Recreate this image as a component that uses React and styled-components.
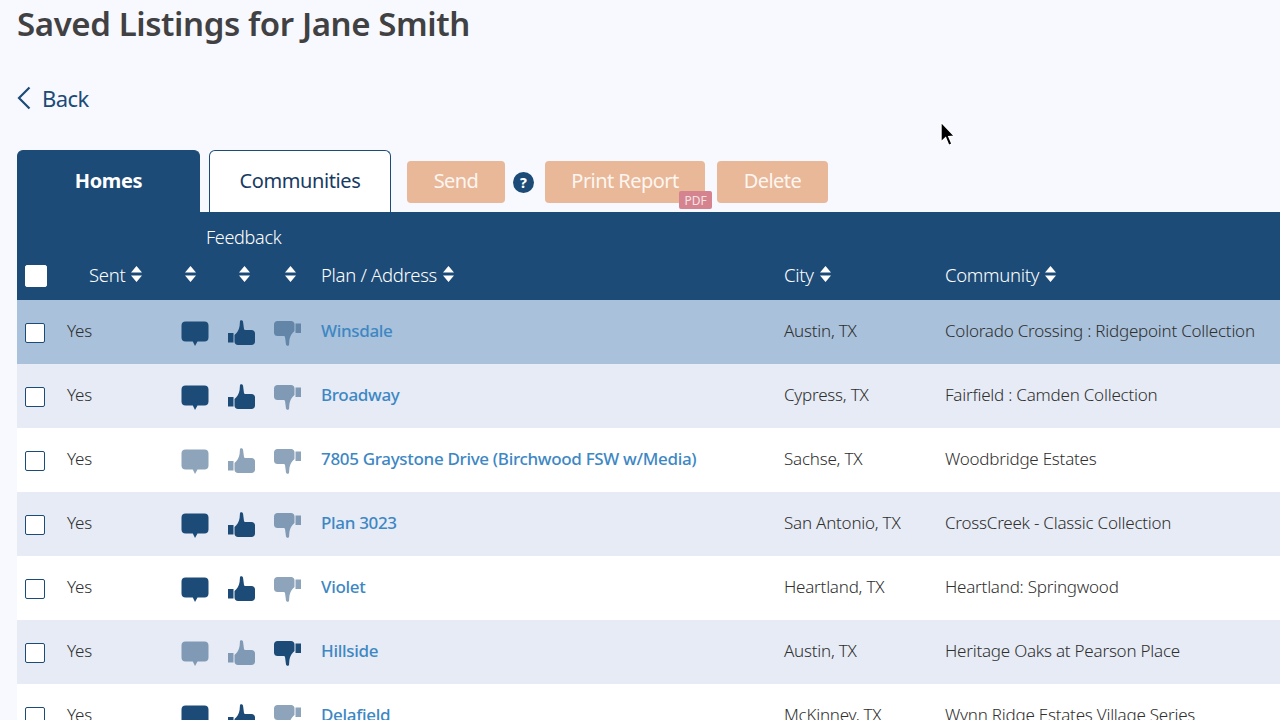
import styled, { createGlobalStyle } from 'styled-components';

const listings = [
    { plan: 'Winsdale', city: 'Austin, TX', community: 'Colorado Crossing : Ridgepoint Collection', chat: true, up: true, down: false },
    { plan: 'Broadway', city: 'Cypress, TX', community: 'Fairfield : Camden Collection', chat: true, up: true, down: false },
    { plan: '7805 Graystone Drive (Birchwood FSW w/Media)', city: 'Sachse, TX', community: 'Woodbridge Estates', chat: false, up: false, down: false },
    { plan: 'Plan 3023', city: 'San Antonio, TX', community: 'CrossCreek - Classic Collection', chat: true, up: true, down: false },
    { plan: 'Violet', city: 'Heartland, TX', community: 'Heartland: Springwood', chat: true, up: true, down: false },
    { plan: 'Hillside', city: 'Austin, TX', community: 'Heritage Oaks at Pearson Place', chat: false, up: false, down: true },
    { plan: 'Delafield', city: 'McKinney, TX', community: 'Wynn Ridge Estates Village Series', chat: true, up: true, down: false },
];

const Global = createGlobalStyle`
    html, body {
        margin: 0;
        height: 100%;
        overflow: hidden;
        background: #f7f9fe;
        font-family: "Noto Sans", "Open Sans", sans-serif;
    }
`;

const Page = styled.div`
    position: relative;
    width: 1280px;
    height: 720px;
    overflow: hidden;
    padding-left: 17px;
    box-sizing: border-box;
`;

const Title = styled.h1`
    margin: 0;
    padding-top: 3px;
    height: 47px;
    font-size: 33px;
    line-height: 42px;
    font-weight: 600;
    letter-spacing: -0.4px;
    color: #414143;
`;

const BackLink = styled.a`
    display: flex;
    align-items: center;
    gap: 11px;
    margin-top: 29px;
    height: 38px;
    font-size: 22px;
    letter-spacing: -0.6px;
    color: #1d4b77;
`;

const Toolbar = styled.div`
    display: flex;
    margin-top: 33px;
    height: 62px;
`;

const Tab = styled.div`
    box-sizing: border-box;
    width: ${p => p.$width}px;
    margin-right: ${p => p.$gap}px;
    border: 1px solid #1d4b77;
    border-bottom: none;
    border-radius: 6px 6px 0 0;
    display: flex;
    align-items: center;
    justify-content: center;
    padding-bottom: 2px;
    font-size: 20px;
    letter-spacing: -0.4px;
    font-weight: ${p => (p.$active ? 700 : 400)};
    background: ${p => (p.$active ? '#1d4b77' : '#fff')};
    color: ${p => (p.$active ? '#fff' : '#173a63')};
`;

const Actions = styled.div`
    display: flex;
    align-items: center;
    align-self: flex-start;
    margin: 11px 0 0 16px;
    height: 42px;
`;

const ActionButton = styled.div`
    position: relative;
    box-sizing: border-box;
    width: ${p => p.$width}px;
    height: 42px;
    margin-right: ${p => p.$gap || 0}px;
    border-radius: 4px;
    background: #e9b899;
    color: #fdf6f0;
    display: flex;
    align-items: center;
    justify-content: center;
    padding-bottom: 3px;
    font-size: 20px;
    letter-spacing: -0.55px;
`;

const Help = styled.span`
    width: 21px;
    height: 21px;
    margin: 1px 11px 0 8px;
    border-radius: 50%;
    background: #1d4b77;
    color: #fff;
    font-size: 14px;
    font-weight: 800;
    display: flex;
    align-items: center;
    justify-content: center;
`;

const PdfBadge = styled.span`
    position: absolute;
    left: 134px;
    top: 30px;
    width: 33px;
    height: 18px;
    border-radius: 2px;
    background: #d5848f;
    color: #f6e3e3;
    font-size: 12px;
    letter-spacing: 0;
    display: flex;
    align-items: center;
    justify-content: center;
`;

const columns = '50px 114px 140px 463px 161px 1fr';

const Head = styled.div`
    background: #1d4b77;
    color: #fff;
    height: 88px;
`;

const FeedbackLabel = styled.div`
    height: 49px;
    padding-left: 189px;
    display: flex;
    align-items: center;
    font-size: 18px;
    font-weight: 300;
    letter-spacing: -0.3px;
`;

const HeadRow = styled.div`
    display: grid;
    grid-template-columns: ${columns};
    align-items: center;
    height: 24px;
    font-size: 18.5px;
    font-weight: 300;
    letter-spacing: -0.3px;
`;

const HeadCell = styled.div`
    display: flex;
    align-items: center;
    gap: 6px;
    padding-left: ${p => p.$indent || 0}px;
`;

const SortGroup = styled.div`
    display: flex;
    align-items: center;
`;

const SortSlot = styled.span`
    display: flex;
    margin-left: ${p => p.$left}px;
`;

const Row = styled.div`
    display: grid;
    grid-template-columns: ${columns};
    align-items: center;
    height: 64px;
    padding-bottom: 4px;
    box-sizing: border-box;
    font-size: 17px;
    font-weight: 300;
    letter-spacing: -0.23px;
    color: #2f2f2f;
    background: ${p => p.$bg};
`;

const Check = styled.span`
    display: block;
    box-sizing: border-box;
    width: ${p => p.$head ? 22 : 20}px;
    height: ${p => p.$head ? 22 : 20}px;
    margin: ${p => (p.$head ? '4px 0 0 8px' : '6px 0 0 8px')};
    background: #fff;
    border: 1px solid ${p => p.$head ? '#fff' : '#1d4b77'};
    border-radius: 2px;
`;

const Feedback = styled.div`
    display: flex;
    align-items: center;
    height: 100%;
`;

const IconSlot = styled.span`
    display: flex;
    width: ${p => p.$width}px;
    margin-top: 6px;
    opacity: ${p => (p.$on ? 1 : 0.5)};
`;

const PlanLink = styled.a`
    color: #3d87c4;
    font-weight: 500;
    letter-spacing: -0.32px;
`;

const Pointer = styled.svg`
    position: absolute;
    left: 938px;
    top: 120px;
`;

const Chevron = () => (
    <svg width="14" height="24" viewBox="0 0 14 24" fill="none" stroke="#1d4b77" strokeWidth="2.2">
        <path d="M12.5 1.5 L2 12 L12.5 22.5" />
    </svg>
);

const SortArrows = () => (
    <svg width="11" height="16" viewBox="0 0 11 16" fill="#fff">
        <path d="M5.5 0 L11 6.6 H0 Z M0 9.4 H11 L5.5 16 Z" />
    </svg>
);

const Bubble = () => (
    <svg width="28" height="25" viewBox="0 0 28 25" fill="#1d4b77">
        <path d="M4.5 0.5 H23.5 C26 0.5 27.5 2 27.5 4.5 V16.5 C27.5 19 26 20.5 23.5 20.5 H16.5 L14 25 L11.8 20.5 H4.5 C2 20.5 0.5 19 0.5 16.5 V4.5 C0.5 2 2 0.5 4.5 0.5 Z" />
    </svg>
);

const Thumb = ({ flip }) => (
    <svg width="28" height="28" viewBox="0 0 28 28" fill="#1d4b77" style={flip ? { transform: 'rotate(180deg)' } : undefined}>
        <rect x="1" y="14" width="5.5" height="9.5" />
        <path d="M7.5 16 C10 14 12 11 12.6 7 L13 2 C13.2 1 15.5 0.8 16 2.5 L17 10 C17.2 10.8 17.8 11 18.5 11 H24.5 C26.5 11 28 12.3 28 14.3 V22.5 C28 24.5 26.5 26 24.5 26 H11 C9 26 7.5 24.5 7.5 22.5 Z" />
    </svg>
);

const rowColor = i => (i === 0 ? '#a9c1da' : i % 2 ? '#e6ebf5' : '#fff');

const App = () => {
    return (
        <Page>
            <Global />
            <Title>Saved Listings for Jane Smith</Title>
            <BackLink><Chevron />Back</BackLink>

            <Toolbar>
                <Tab $active $width={183} $gap={9}>Homes</Tab>
                <Tab $width={182} $gap={0}>Communities</Tab>
                <Actions>
                    <ActionButton $width={98}>Send</ActionButton>
                    <Help>?</Help>
                    <ActionButton $width={160} $gap={12}>
                        Print Report
                        <PdfBadge>PDF</PdfBadge>
                    </ActionButton>
                    <ActionButton $width={111}>Delete</ActionButton>
                </Actions>
            </Toolbar>

            <Head>
                <FeedbackLabel>Feedback</FeedbackLabel>
                <HeadRow>
                    <HeadCell><Check $head /></HeadCell>
                    <HeadCell $indent={22}>Sent <SortArrows /></HeadCell>
                    <SortGroup>
                        <SortSlot $left={4}><SortArrows /></SortSlot>
                        <SortSlot $left={43}><SortArrows /></SortSlot>
                        <SortSlot $left={35}><SortArrows /></SortSlot>
                    </SortGroup>
                    <HeadCell>Plan / Address <SortArrows /></HeadCell>
                    <HeadCell>City <SortArrows /></HeadCell>
                    <HeadCell>Community <SortArrows /></HeadCell>
                </HeadRow>
            </Head>

            {listings.map((item, i) => (
                <Row key={item.plan} $bg={rowColor(i)}>
                    <Check />
                    <span>Yes</span>
                    <Feedback>
                        <IconSlot $width={46} $on={item.chat}><Bubble /></IconSlot>
                        <IconSlot $width={47} $on={item.up}><Thumb /></IconSlot>
                        <IconSlot $width={47} $on={item.down}><Thumb flip /></IconSlot>
                    </Feedback>
                    <PlanLink>{item.plan}</PlanLink>
                    <span>{item.city}</span>
                    <span>{item.community}</span>
                </Row>
            ))}

            <Pointer width="18" height="28" viewBox="0 0 18 28">
                <path d="M3 2 V22 L7.6 17.8 L10.8 25.4 L14 24 L10.8 16.6 L16.6 16.2 Z" fill="#000" stroke="#fff" strokeWidth="1.4" />
            </Pointer>
        </Page>
    );
};

export default App;
